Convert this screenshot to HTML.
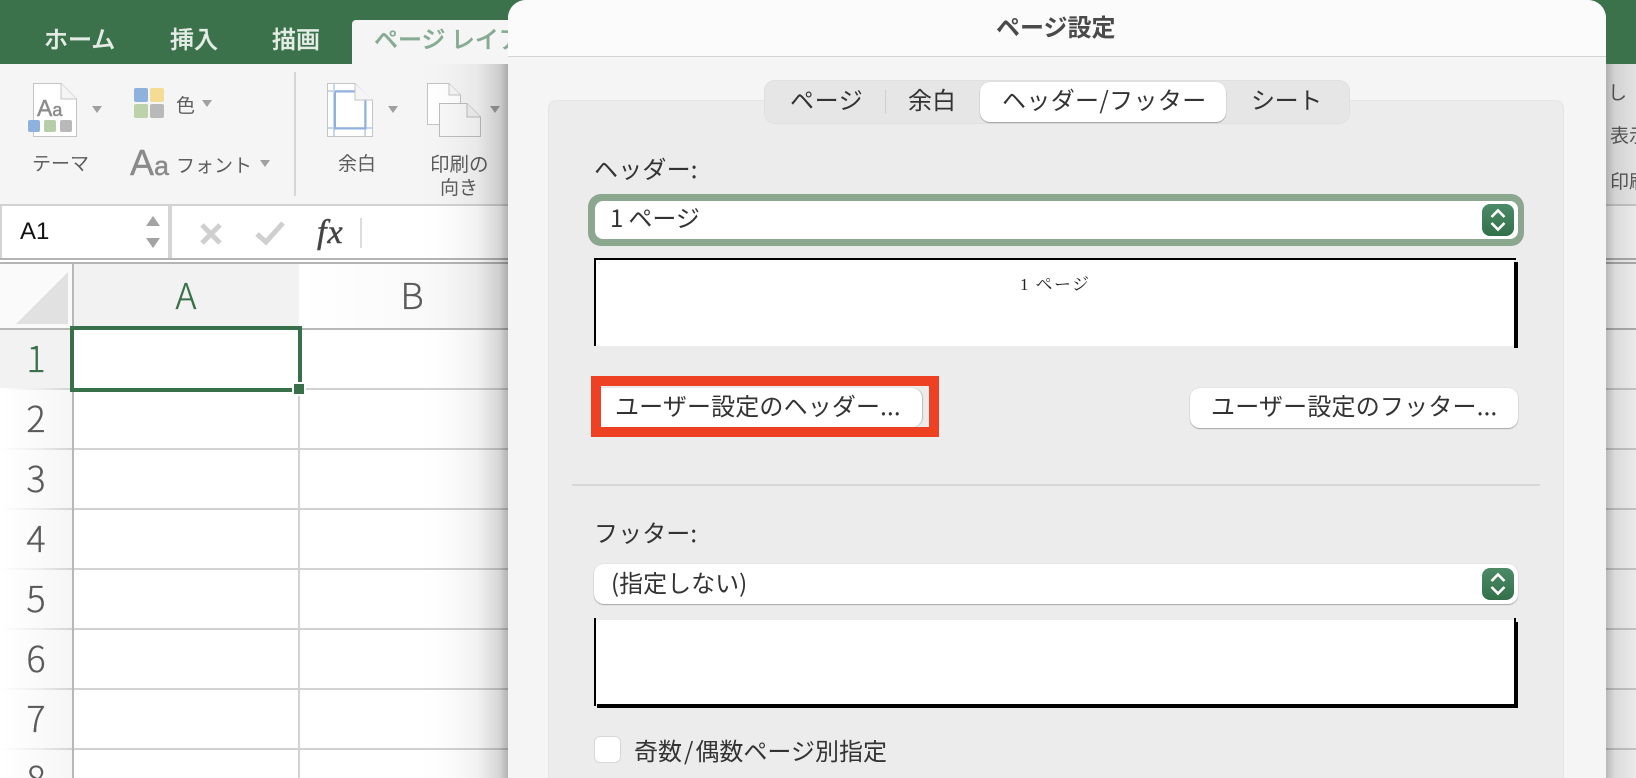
<!DOCTYPE html>
<html lang="ja"><head><meta charset="utf-8"><title>ページ設定</title>
<style>
*{box-sizing:border-box;margin:0;padding:0}
html,body{width:1636px;height:778px;overflow:hidden;background:#fff}
body{position:relative;font-family:"Liberation Sans","Noto Sans CJK JP",sans-serif}
.a{position:absolute}
.t{position:absolute;white-space:nowrap;line-height:30px;height:30px}
.jp{font-family:"Noto Sans CJK JP","Liberation Sans",sans-serif}
.d{color:#333;font-size:24px}
.r{color:#5d5d5d;font-size:19px}
.n{color:#5a5a5a;font-size:36px;line-height:44px;height:44px;width:72px;text-align:center;left:0;font-weight:300;-webkit-text-stroke:.3px currentColor}
.hl{position:absolute;left:0;width:1636px;height:2px;background:linear-gradient(90deg,#fff 0,#ececec 40px,#d2d2d2 72px)}
.btn{position:absolute;background:#fff;border-radius:10px;box-shadow:0 1px 1px rgba(0,0,0,.28),0 0 1px rgba(0,0,0,.2)}
.k{position:absolute;background:#000}
.tb{font-size:24px;font-weight:500;-webkit-text-stroke:.3px currentColor}
</style></head><body>

<!-- title / tab strip -->
<div class="a" style="left:0;top:0;width:1636px;height:64px;background:#3b714b"></div>
<div class="a" style="left:352px;top:20px;width:200px;height:44px;background:#f5f5f5;border-radius:4px 4px 0 0"></div>
<div class="t jp tb" style="left:44px;top:23px;color:#e4ece6">ホーム</div>
<div class="t jp tb" style="left:170px;top:23px;color:#e4ece6">挿入</div>
<div class="t jp tb" style="left:272px;top:23px;color:#e4ece6">描画</div>
<div class="t jp tb" style="left:374px;top:23px;color:#86ab92">ページ レイアウト</div>

<!-- ribbon -->
<div class="a" style="left:0;top:64px;width:1636px;height:140px;background:#f5f5f5"></div>
<div class="a" style="left:294px;top:72px;width:2px;height:124px;background:#d6d6d6"></div>
<div class="t jp r" style="left:32px;top:148px">テーマ</div>
<div class="t jp r" style="left:176px;top:90px">色</div>
<div class="t jp r" style="left:176px;top:150px">フォント</div>
<div class="t" style="left:130px;top:143px;font-size:36px;color:#8a8a8a;line-height:40px;height:40px;-webkit-text-stroke:.4px #8a8a8a">A<span style="font-size:27px">a</span></div>
<div class="t jp r" style="left:338px;top:148px">余白</div>
<div class="t jp r" style="left:430px;top:148px;font-size:19.5px">印刷の</div>
<div class="t jp r" style="left:440px;top:172px">向き</div>
<div class="t jp" style="left:1608px;top:77px;font-size:19px;color:#5d5d5d">し</div>
<div class="t jp r" style="left:1610px;top:120px">表示</div>
<div class="t jp r" style="left:1610px;top:166px">印刷</div>

<svg class="a" style="left:0;top:60px" width="520" height="145" viewBox="0 60 520 145">
 <!-- theme -->
 <path d="M33.5 83.5H61L76.5 99V136.5H33.5Z" fill="#fff" stroke="#c4c4c4"/><path d="M61 83.5V99H76.5" fill="#f5f5f5" stroke="#c4c4c4"/>
 <text x="37" y="116" font-family="Liberation Sans" font-size="23" fill="#8c8c8c" stroke="#8c8c8c" stroke-width=".5">A<tspan font-size="18">a</tspan></text>
 <rect x="28" y="120" width="12" height="12" rx="2" fill="#8fb1de"/><rect x="44" y="120" width="12" height="12" rx="2" fill="#b6cfaa"/><rect x="60" y="120" width="12" height="12" rx="2" fill="#b9b9b9"/>
 <path d="M92 106h10l-5 7z" fill="#a0a0a0"/>
 <!-- colour -->
 <rect x="134" y="88" width="14" height="14" rx="2" fill="#8fb1de"/><rect x="150" y="88" width="14" height="14" rx="2" fill="#f5dc95"/><rect x="134" y="104" width="14" height="14" rx="2" fill="#bbd2aa"/><rect x="150" y="104" width="14" height="14" rx="2" fill="#b9b9b9"/>
 <path d="M202 100h10l-5 7z" fill="#a0a0a0"/>
 <path d="M260 160h10l-5 7z" fill="#a0a0a0"/>
 <!-- margins -->
 <path d="M327.5 83.5H355L372.5 101V136.5H327.5Z" fill="#fff" stroke="#c4c4c4"/>
 <path d="M328 91H355M328 128H372M334 84V136M365 100V136" stroke="#c7d8ee" stroke-width="2" fill="none"/>
 <path d="M335 91.5V128.5H365.5V100" stroke="#8fb1de" stroke-width="2" fill="none"/><path d="M335 91.5H355" stroke="#8fb1de" stroke-width="2"/>
 <path d="M355 83.5V100H372.5" fill="#f5f5f5" stroke="#c4c4c4"/>
 <path d="M388 106h10l-5 7z" fill="#a0a0a0"/>
 <!-- orientation -->
 <path d="M427.5 83.5H449L460.5 95V124.5H427.5Z" fill="#fff" stroke="#c4c4c4"/><path d="M449 83.5V95H460.5" fill="#f5f5f5" stroke="#c4c4c4"/>
 <path d="M439.5 103.5H467L480.5 117V136.5H439.5Z" fill="#f8f8f8" stroke="#bdbdbd"/><path d="M467 103.5V117H480.5" fill="#f0f0f0" stroke="#bdbdbd"/>
 <path d="M490 106h10l-5 7z" fill="#a0a0a0"/>
</svg>

<!-- formula bar -->
<div class="a" style="left:0;top:204px;width:1636px;height:54px;background:#fff;border-top:2px solid #d2d2d2"></div>
<div class="a" style="left:0;top:206px;width:2px;height:52px;background:#d4d4d4"></div>
<div class="a" style="left:168px;top:206px;width:4px;height:52px;background:#d4d4d4"></div>
<div class="t" style="left:20px;top:217px;font-size:24px;color:#111">A1</div>
<svg class="a" style="left:0;top:204px" width="400" height="56" viewBox="0 204 400 56">
 <path d="M146 226l7-10 7 10zM146 238l7 10 7-10z" fill="#a3a3a3"/>
 <path d="M202 225l18 18M220 225l-18 18" stroke="#cfcfcf" stroke-width="5" fill="none"/>
 <path d="M257 234l9 8 17-19" stroke="#cfcfcf" stroke-width="5" fill="none"/>
 <rect x="360" y="218" width="2" height="30" fill="#dcdcdc"/>
</svg>
<div class="t" style="left:317px;top:218px;font-family:'Liberation Serif',serif;font-style:italic;font-size:34px;letter-spacing:1px;color:#444;-webkit-text-stroke:.5px #444">fx</div>
<div class="a" style="left:0;top:258px;width:1636px;height:2px;background:#b4b4b4"></div>
<div class="a" style="left:0;top:262px;width:1636px;height:2px;background:#b4b4b4"></div>

<!-- sheet -->
<div class="a" style="left:0;top:264px;width:73px;height:64px;background:#fafafa"></div>
<div class="a" style="left:74px;top:264px;width:225px;height:64px;background:#f2f2f2"></div>
<div class="a" style="left:300px;top:264px;width:208px;height:64px;background:linear-gradient(90deg,#fff,#f6f6f6)"></div>
<div class="a" style="left:0;top:390px;width:72px;height:388px;background:linear-gradient(90deg,#fff,#f6f6f6)"></div>
<div class="a" style="left:0;top:330px;width:72px;height:58px;background:#f2f2f2"></div>
<svg class="a" style="left:0;top:264px" width="72" height="64"><path d="M68 8V60H16Z" fill="#e1e1e1"/></svg>
<div class="a" style="left:0;top:328px;width:1636px;height:2px;background:#b8b8b8"></div>
<div class="hl" style="top:388px"></div><div class="hl" style="top:448px"></div><div class="hl" style="top:508px"></div><div class="hl" style="top:568px"></div><div class="hl" style="top:628px"></div><div class="hl" style="top:688px"></div><div class="hl" style="top:748px"></div>
<div class="a" style="left:72px;top:264px;width:2px;height:514px;background:#b8b8b8"></div>
<div class="a" style="left:298px;top:328px;width:2px;height:450px;background:#d2d2d2"></div>

<div class="t n jp" style="left:164px;width:44px;top:272px;color:#38704a">A</div>
<div class="t n jp" style="left:390px;width:44px;top:272px">B</div>
<div class="t n jp" style="top:335px;color:#38704a">1</div>
<div class="t n jp" style="top:395px">2</div>
<div class="t n jp" style="top:455px">3</div>
<div class="t n jp" style="top:515px">4</div>
<div class="t n jp" style="top:575px">5</div>
<div class="t n jp" style="top:635px">6</div>
<div class="t n jp" style="top:695px">7</div>
<div class="t n jp" style="top:755px">8</div>

<div class="a" style="left:70px;top:326px;width:232px;height:66px;border:4px solid #38704a"></div>
<div class="a" style="left:292px;top:382px;width:14px;height:14px;background:#fff"></div>
<div class="a" style="left:294px;top:384px;width:10px;height:10px;background:#38704a"></div>

<!-- dialog shadow -->
<div class="a" style="left:420px;top:64px;width:88px;height:714px;background:linear-gradient(90deg,rgba(0,0,0,0) 0,rgba(0,0,0,.01) 30%,rgba(0,0,0,.05) 65%,rgba(0,0,0,.16) 90%,rgba(0,0,0,.3) 100%)"></div>
<div class="a" style="left:1606px;top:64px;width:30px;height:714px;background:linear-gradient(90deg,rgba(0,0,0,.28) 0,rgba(0,0,0,.14) 30%,rgba(0,0,0,.08) 100%)"></div>

<!-- dialog -->
<div class="a" style="left:508px;top:0;width:1098px;height:778px;background:#f5f5f5;border-radius:18px 18px 0 0;overflow:hidden">
 <div class="a" style="left:0;top:0;width:1098px;height:57px;background:#fbfbfb;border-bottom:1px solid #d4d4d4"></div>
</div>
<div class="t jp" style="left:996px;top:11px;font-size:24px;font-weight:700;color:#4a4a4a">ページ設定</div>

<!-- panel -->
<div class="a" style="left:548px;top:100px;width:1016px;height:678px;background:#ececec;border:1px solid #e5e5e5;border-bottom:0;border-radius:8px 8px 0 0"></div>

<!-- tabs -->
<div class="a" style="left:764px;top:80px;width:586px;height:44px;background:#e6e6e6;border:1px solid #e0e0e0;border-radius:11px"></div>
<div class="a" style="left:885px;top:90px;width:1px;height:24px;background:#cfcfcf"></div>
<div class="btn" style="left:980px;top:82px;width:246px;height:40px"></div>
<div class="t jp d" style="left:790px;top:84px;letter-spacing:.6px">ページ</div>
<div class="t jp d" style="left:908px;top:84px">余白</div>
<div class="t jp d" style="left:1002px;top:84px;letter-spacing:.35px">ヘッダー/フッター</div>
<div class="t jp d" style="left:1251px;top:84px;letter-spacing:-.4px">シート</div>

<div class="t jp d" style="left:594px;top:153px;letter-spacing:.2px">ヘッダー:</div>

<!-- header select -->
<div class="a" style="left:588px;top:194px;width:936px;height:52px;background:#8ba88f;border-radius:13px"></div>
<div class="a" style="left:595px;top:201px;width:923px;height:38px;background:#fff;border-radius:8px"></div>
<svg class="a" style="left:1482px;top:204px" width="32" height="32" viewBox="0 0 32 32"><defs><linearGradient id="g" x1="0" y1="0" x2="0" y2="1"><stop offset="0" stop-color="#4c8a68"/><stop offset="1" stop-color="#33704a"/></linearGradient></defs><rect width="32" height="32" rx="8" fill="url(#g)"/><path d="M9.5 13L16 6.5L22.5 13M9.5 19L16 25.5L22.5 19" stroke="#fff" stroke-width="2.6" fill="none"/></svg>
<div class="t jp d" style="left:610px;top:202px"><span style="letter-spacing:5px">1</span>ページ</div>

<!-- header preview -->
<div class="a" style="left:596px;top:260px;width:918px;height:86px;background:#fff"></div>
<div class="k" style="left:594px;top:258px;width:2px;height:88px"></div>
<div class="k" style="left:594px;top:258px;width:922px;height:2px"></div>
<div class="k" style="left:1514px;top:262px;width:4px;height:86px"></div>
<div class="t" style="left:1020px;top:270px;font-family:'Liberation Serif','Noto Serif CJK SC',serif;font-size:17px;letter-spacing:1.4px;color:#222">1 ページ</div>

<!-- red annotated button -->
<div class="a" style="left:591px;top:376px;width:348px;height:61px;background:#ee4023"></div>
<div class="a" style="left:601px;top:386px;width:328px;height:41px;background:#ececec"></div>
<div class="a" style="left:601px;top:388px;width:321px;height:39px;background:#fff;border-radius:0 10px 10px 0;box-shadow:1px 0 1px rgba(0,0,0,.2)"></div>
<div class="t jp d" style="left:615px;top:390px;letter-spacing:.15px">ユーザー設定のヘッダー...</div>

<div class="btn" style="left:1190px;top:388px;width:328px;height:40px"></div>
<div class="t jp d" style="left:1211px;top:390px;letter-spacing:.2px">ユーザー設定のフッター...</div>

<div class="a" style="left:572px;top:484px;width:968px;height:2px;background:#d8d8d8"></div>

<div class="t jp d" style="left:594px;top:517px;letter-spacing:.1px">フッター:</div>

<!-- footer select -->
<div class="btn" style="left:594px;top:564px;width:924px;height:40px"></div>
<svg class="a" style="left:1482px;top:568px" width="32" height="32" viewBox="0 0 32 32"><rect width="32" height="32" rx="8" fill="url(#g)"/><path d="M9.5 13L16 6.5L22.5 13M9.5 19L16 25.5L22.5 19" stroke="#fff" stroke-width="2.6" fill="none"/></svg>
<div class="t jp d" style="left:611px;top:567px">(指定しない)</div>

<!-- footer preview -->
<div class="a" style="left:596px;top:620px;width:918px;height:84px;background:#fff"></div>
<div class="k" style="left:594px;top:618px;width:2px;height:88px"></div>
<div class="k" style="left:597px;top:704px;width:921px;height:4px"></div>
<div class="k" style="left:1514px;top:622px;width:4px;height:86px"></div>
<div class="k" style="left:1514px;top:618px;width:2px;height:4px"></div>

<!-- checkbox -->
<div class="a" style="left:594px;top:736px;width:27px;height:27px;background:#fff;border:1px solid #d8d8d8;border-radius:6px"></div>
<div class="t jp d" style="left:634px;top:735px">奇数<span style="margin:0 2px">/</span>偶数ページ別指定</div>

</body></html>
